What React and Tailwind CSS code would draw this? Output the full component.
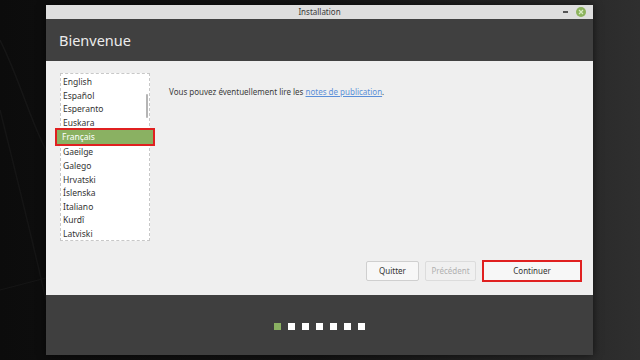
import React from 'react';

const languages = [
  'English',
  'Español',
  'Esperanto',
  'Euskara',
  'Français',
  'Gaeilge',
  'Galego',
  'Hrvatski',
  'Íslenska',
  'Italiano',
  'Kurdî',
  'Latviski',
];

const font = { fontFamily: '"Noto Sans", "Open Sans", sans-serif' };

const App = () => {
  return (
    <div
      className="relative w-[640px] h-[360px] overflow-hidden bg-gradient-to-r from-[#0c0c0c] via-[#141414] to-[#2f2f2f]"
      style={font}
    >
      {/* wallpaper strokes */}
      <svg className="absolute inset-0" width="640" height="360" viewBox="0 0 640 360">
        <path d="M0 40 C 20 80, 30 120, 46 150" stroke="#161616" strokeWidth="1.5" fill="none" />
        <path d="M0 110 C 15 170, 30 230, 46 300" stroke="#151515" strokeWidth="1.5" fill="none" />
        <path d="M0 290 L 46 278" stroke="#161616" strokeWidth="1" fill="none" />
      </svg>

      <div className="relative ml-[46px] mt-[5px] w-[547px] h-[350px] flex flex-col shadow-[0_0_8px_rgba(0,0,0,0.6)]">
        {/* title bar */}
        <div className="h-[14px] bg-[#dedede] flex items-center relative">
          <div className="flex-1 text-center text-[8px] text-[#3a3a3a] leading-none">Installation</div>
          <div className="absolute right-[7px] top-[2px] flex items-center gap-[8px]">
            <div className="w-[5px] h-[1.5px] bg-[#555]" />
            <div className="w-[10px] h-[10px] rounded-full bg-[#8cb35d] flex items-center justify-center">
              <svg width="6" height="6" viewBox="0 0 6 6">
                <path d="M1 1 L5 5 M5 1 L1 5" stroke="#d9ecc4" strokeWidth="1.2" />
              </svg>
            </div>
          </div>
        </div>

        {/* header */}
        <div className="h-[42px] bg-[#404040] flex items-center pl-[13px]">
          <span className="text-[14.5px] text-[#ececec] leading-none">Bienvenue</span>
        </div>

        {/* content */}
        <div className="h-[234px] bg-[#efefef] flex flex-col pl-[14px] pr-[11px] pt-[12px] pb-[13px]">
          <div className="flex flex-1">
            <div className="relative w-[90px] h-[168px] bg-white border border-dashed border-[#c8c8c8] pt-[1px]">
              {languages.map((lang) =>
                lang === 'Français' ? (
                  <div
                    key={lang}
                    className="h-[14px] my-[1px] -mx-[4px] px-[4px] bg-[#8ab162] outline-2 outline-[#e02020] text-white text-[8.5px] leading-[14px]"
                  >
                    <span className="pl-[1px]">{lang}</span>
                  </div>
                ) : (
                  <div key={lang} className="h-[13.6px] px-[2px] text-[8.5px] leading-[13.6px] text-[#333]">
                    {lang}
                  </div>
                )
              )}
              <div className="absolute right-[1px] top-[20px] w-[2px] h-[24px] rounded bg-[#b5b5b5]" />
            </div>

            <div className="pl-[19px] pt-[13px] text-[8px] text-[#3c3c3c]">
              Vous pouvez éventuellement lire les{' '}
              <span className="text-[#5b8fd8] underline">notes de publication</span>.
            </div>
          </div>

          <div className="flex justify-end items-center gap-[6px]">
            <button className="w-[53px] h-[20px] bg-[#f7f7f7] border border-[#cfcfcf] rounded-[2px] text-[8px] text-[#333]">
              Quitter
            </button>
            <button className="w-[51px] h-[20px] bg-[#f0f0f0] border border-[#dcdcdc] rounded-[2px] text-[8px] text-[#b0b0b0]">
              Précédent
            </button>
            <button className="w-[100px] h-[22px] bg-[#f7f7f7] border-2 border-[#e02020] text-[8px] text-[#333]">
              Continuer
            </button>
          </div>
        </div>

        {/* progress */}
        <div className="flex-1 bg-[#3f3f3f] flex items-center justify-center gap-[7px] pt-[2px]">
          <div className="w-[7px] h-[7px] bg-[#8ab162]" />
          <div className="w-[7px] h-[7px] bg-white" />
          <div className="w-[7px] h-[7px] bg-white" />
          <div className="w-[7px] h-[7px] bg-white" />
          <div className="w-[7px] h-[7px] bg-white" />
          <div className="w-[7px] h-[7px] bg-white" />
          <div className="w-[7px] h-[7px] bg-white" />
        </div>
      </div>
    </div>
  );
};

export default App;
